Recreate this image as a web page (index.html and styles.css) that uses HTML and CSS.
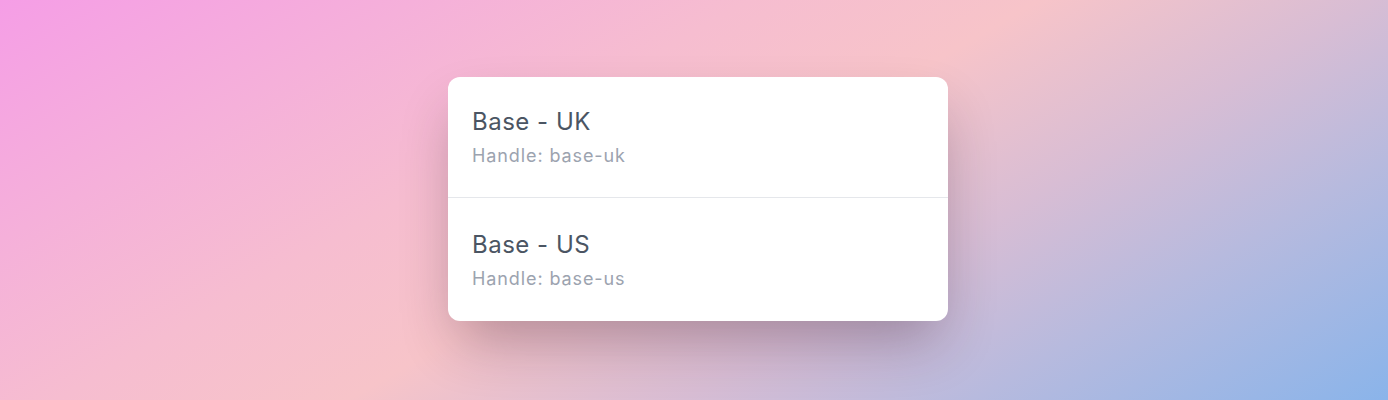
FILE: index.html
```html
<!DOCTYPE html>
<html lang="en">
<head>
<meta charset="utf-8">
<title>Handles</title>
<link rel="stylesheet" href="styles.css">
</head>
<body>
<main class="stage">
  <ul class="card">
    <li class="row">
      <div class="title">Base - UK</div>
      <div class="handle">Handle: base-uk</div>
    </li>
    <li class="row">
      <div class="title">Base - US</div>
      <div class="handle">Handle: base-us</div>
    </li>
  </ul>
</main>
</body>
</html>
```

FILE: styles.css
```css
* { box-sizing: border-box; }
html, body { margin: 0; height: 100%; }
body {
  font-family: Inter, "Noto Sans", sans-serif;
  background: linear-gradient(150deg, #f59ee6 0%, #f5b0da 20%, #f6bdd0 36%, #f7c4c9 50%, #d8bdd4 66%, #b7bade 80%, #8ab4ea 100%);
  overflow: hidden;
}
.stage {
  height: 400px;
  display: flex;
  align-items: flex-start;
  justify-content: center;
  padding: 77px 0 0 8px;
}
.card {
  list-style: none;
  margin: 0;
  padding: 0;
  width: 500px;
  background: #fff;
  border-radius: 12px;
  box-shadow: 0 28px 56px -10px rgba(40, 20, 40, 0.32);
  overflow: hidden;
}
.row {
  padding: 29px 24px 27px;
  display: flex;
  flex-direction: column;
  gap: 4px;
}
.row + .row {
  border-top: 1px solid #e5e7eb;
  padding: 31px 24px 28px;
}
.title {
  font-size: 24px;
  line-height: 32px;
  letter-spacing: 0.5px;
  color: #4b5563;
}
.handle {
  font-size: 18px;
  line-height: 28px;
  letter-spacing: 0.9px;
  color: #9ca3af;
}
```
